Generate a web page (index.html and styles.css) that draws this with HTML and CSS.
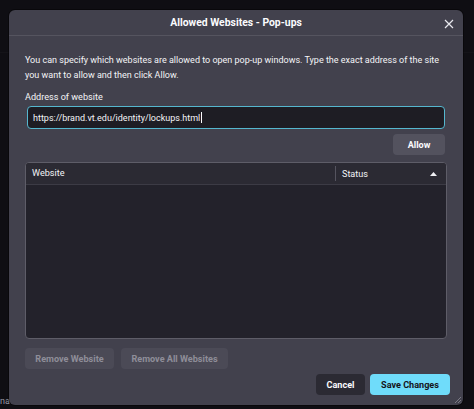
FILE: index.html
```html
<!DOCTYPE html>
<html>
<head>
<meta charset="utf-8">
<link rel="stylesheet" href="styles.css">
</head>
<body>
<div class="backdrop">
  <div class="side-text">na</div>
  <div class="dialog">
    <div class="titlebar">
      <span class="title">Allowed Websites - Pop-ups</span>
      <svg class="close" width="10" height="10" viewBox="0 0 10 10"><path d="M1 1L9 9M9 1L1 9" stroke="#e8e8ee" stroke-width="1.2" fill="none"/></svg>
    </div>
    <div class="content">
      <p class="desc">You can specify which websites are allowed to open pop-up windows. Type the exact address of the site you want to allow and then click Allow.</p>
      <label class="label">Address of website</label>
      <div class="input"><span>https://brand.vt.edu/identity/lockups.html</span><span class="caret"></span></div>
      <div class="allow-row"><button class="btn btn-allow">Allow</button></div>
      <div class="table">
        <div class="thead">
          <div class="th th-site">Website</div>
          <div class="th th-status">Status<svg class="sort" width="7" height="4" viewBox="0 0 7 4"><path d="M0 4L3.5 0L7 4Z" fill="#f0f0f4"/></svg></div>
        </div>
        <div class="tbody"></div>
      </div>
      <div class="remove-row">
        <button class="btn btn-disabled">Remove Website</button>
        <button class="btn btn-disabled">Remove All Websites</button>
      </div>
      <div class="footer">
        <button class="btn btn-cancel">Cancel</button>
        <button class="btn btn-save">Save Changes</button>
      </div>
    </div>
    <svg class="grip" width="8" height="8" viewBox="0 0 8 8"><path d="M7 1L1 7M7 4L4 7M7 6.5L6.5 7" stroke="#8a8994" stroke-width="0.8"/></svg>
  </div>
</div>
</body>
</html>
```
FILE: styles.css
```css
* { box-sizing: border-box; }
html, body { margin: 0; padding: 0; }
body {
  width: 474px;
  height: 409px;
  background: #0f0e13;
  font-family: Roboto, "Noto Sans", "Liberation Sans", sans-serif;
  color: #f4f4f7;
  overflow: hidden;
}
.backdrop {
  position: relative;
  width: 474px;
  height: 409px;
  padding: 10px 0 0 9px;
  background: linear-gradient(#0f0e13 0 52px, #141318 52px 53px, #0f0e13 53px);
}
.side-text {
  position: absolute;
  left: 0;
  top: 396px;
  font-size: 9px;
  color: #9a99a3;
}
.dialog {
  position: relative;
  width: 454px;
  height: 395px;
  background: #42414d;
  border-radius: 6px;
  box-shadow: 0 0 0 1px rgba(0,0,0,0.4);
}
.titlebar {
  height: 26px;
  display: flex;
  align-items: center;
  justify-content: center;
  border-bottom: 1px solid #55545f;
  position: relative;
}
.title {
  font-size: 10.4px;
  font-weight: 700;
  color: #fbfbfe;
}
.close {
  position: absolute;
  right: 9px;
  top: 9px;
}
.content {
  padding: 0 16px 0 16px;
}
.desc {
  margin: 17px 0 0 0;
  font-size: 9px;
  line-height: 15px;
}
.label {
  display: block;
  margin-top: 7px;
  font-size: 9.1px;
  line-height: 14px;
}
.input {
  margin: 2px 2px 0 2px;
  height: 23px;
  border: 1.5px solid #55b7cf;
  border-radius: 4px;
  background: #1e1d24;
  display: flex;
  align-items: center;
  padding-left: 5px;
  font-size: 9px;
}
.caret {
  display: inline-block;
  width: 1px;
  height: 11px;
  background: #fbfbfe;
  margin-left: 1px;
}
.allow-row {
  display: flex;
  justify-content: flex-end;
  margin: 5px 2px 0 0;
}
.btn {
  font-family: inherit;
  font-size: 9.1px;
  font-weight: 700;
  border: none;
  border-radius: 4px;
  height: 21px;
  padding: 0;
  white-space: nowrap;
  text-align: center;
}
.btn-allow {
  width: 52px;
  background: #53525e;
  color: #fbfbfe;
}
.table {
  margin-top: 7px;
  height: 177px;
  border: 1px solid #5e5d68;
  border-radius: 4px;
  background: #23222b;
  display: flex;
  flex-direction: column;
  overflow: hidden;
}
.thead {
  height: 22px;
  display: flex;
  align-items: center;
  background: #2b2a33;
  border-bottom: 1px solid #3c3b45;
  font-size: 9.1px;
}
.th-site {
  flex: 1;
  padding-left: 6px;
  border-right: 1px solid #55545f;
  height: 15px;
  line-height: 15px;
}
.th-status {
  width: 110px;
  padding-left: 6px;
  padding-right: 9px;
  display: flex;
  align-items: center;
  justify-content: space-between;
}
.tbody { flex: 1; }
.remove-row {
  display: flex;
  gap: 7px;
  margin-top: 9px;
}
.btn-disabled {
  background: #4b4a56;
  color: #8f8e99;
}
.remove-row .btn-disabled:first-child { width: 89px; }
.remove-row .btn-disabled:last-child { width: 107px; }
.footer {
  display: flex;
  justify-content: flex-end;
  gap: 5px;
  margin: 5px -3px 0 0;
}
.btn-cancel {
  width: 49px;
  background: #2b2a33;
  color: #fbfbfe;
}
.btn-save {
  width: 80px;
  background: #6fdcfa;
  color: #15141a;
}
.grip {
  position: absolute;
  right: 1px;
  bottom: 1px;
}
```
